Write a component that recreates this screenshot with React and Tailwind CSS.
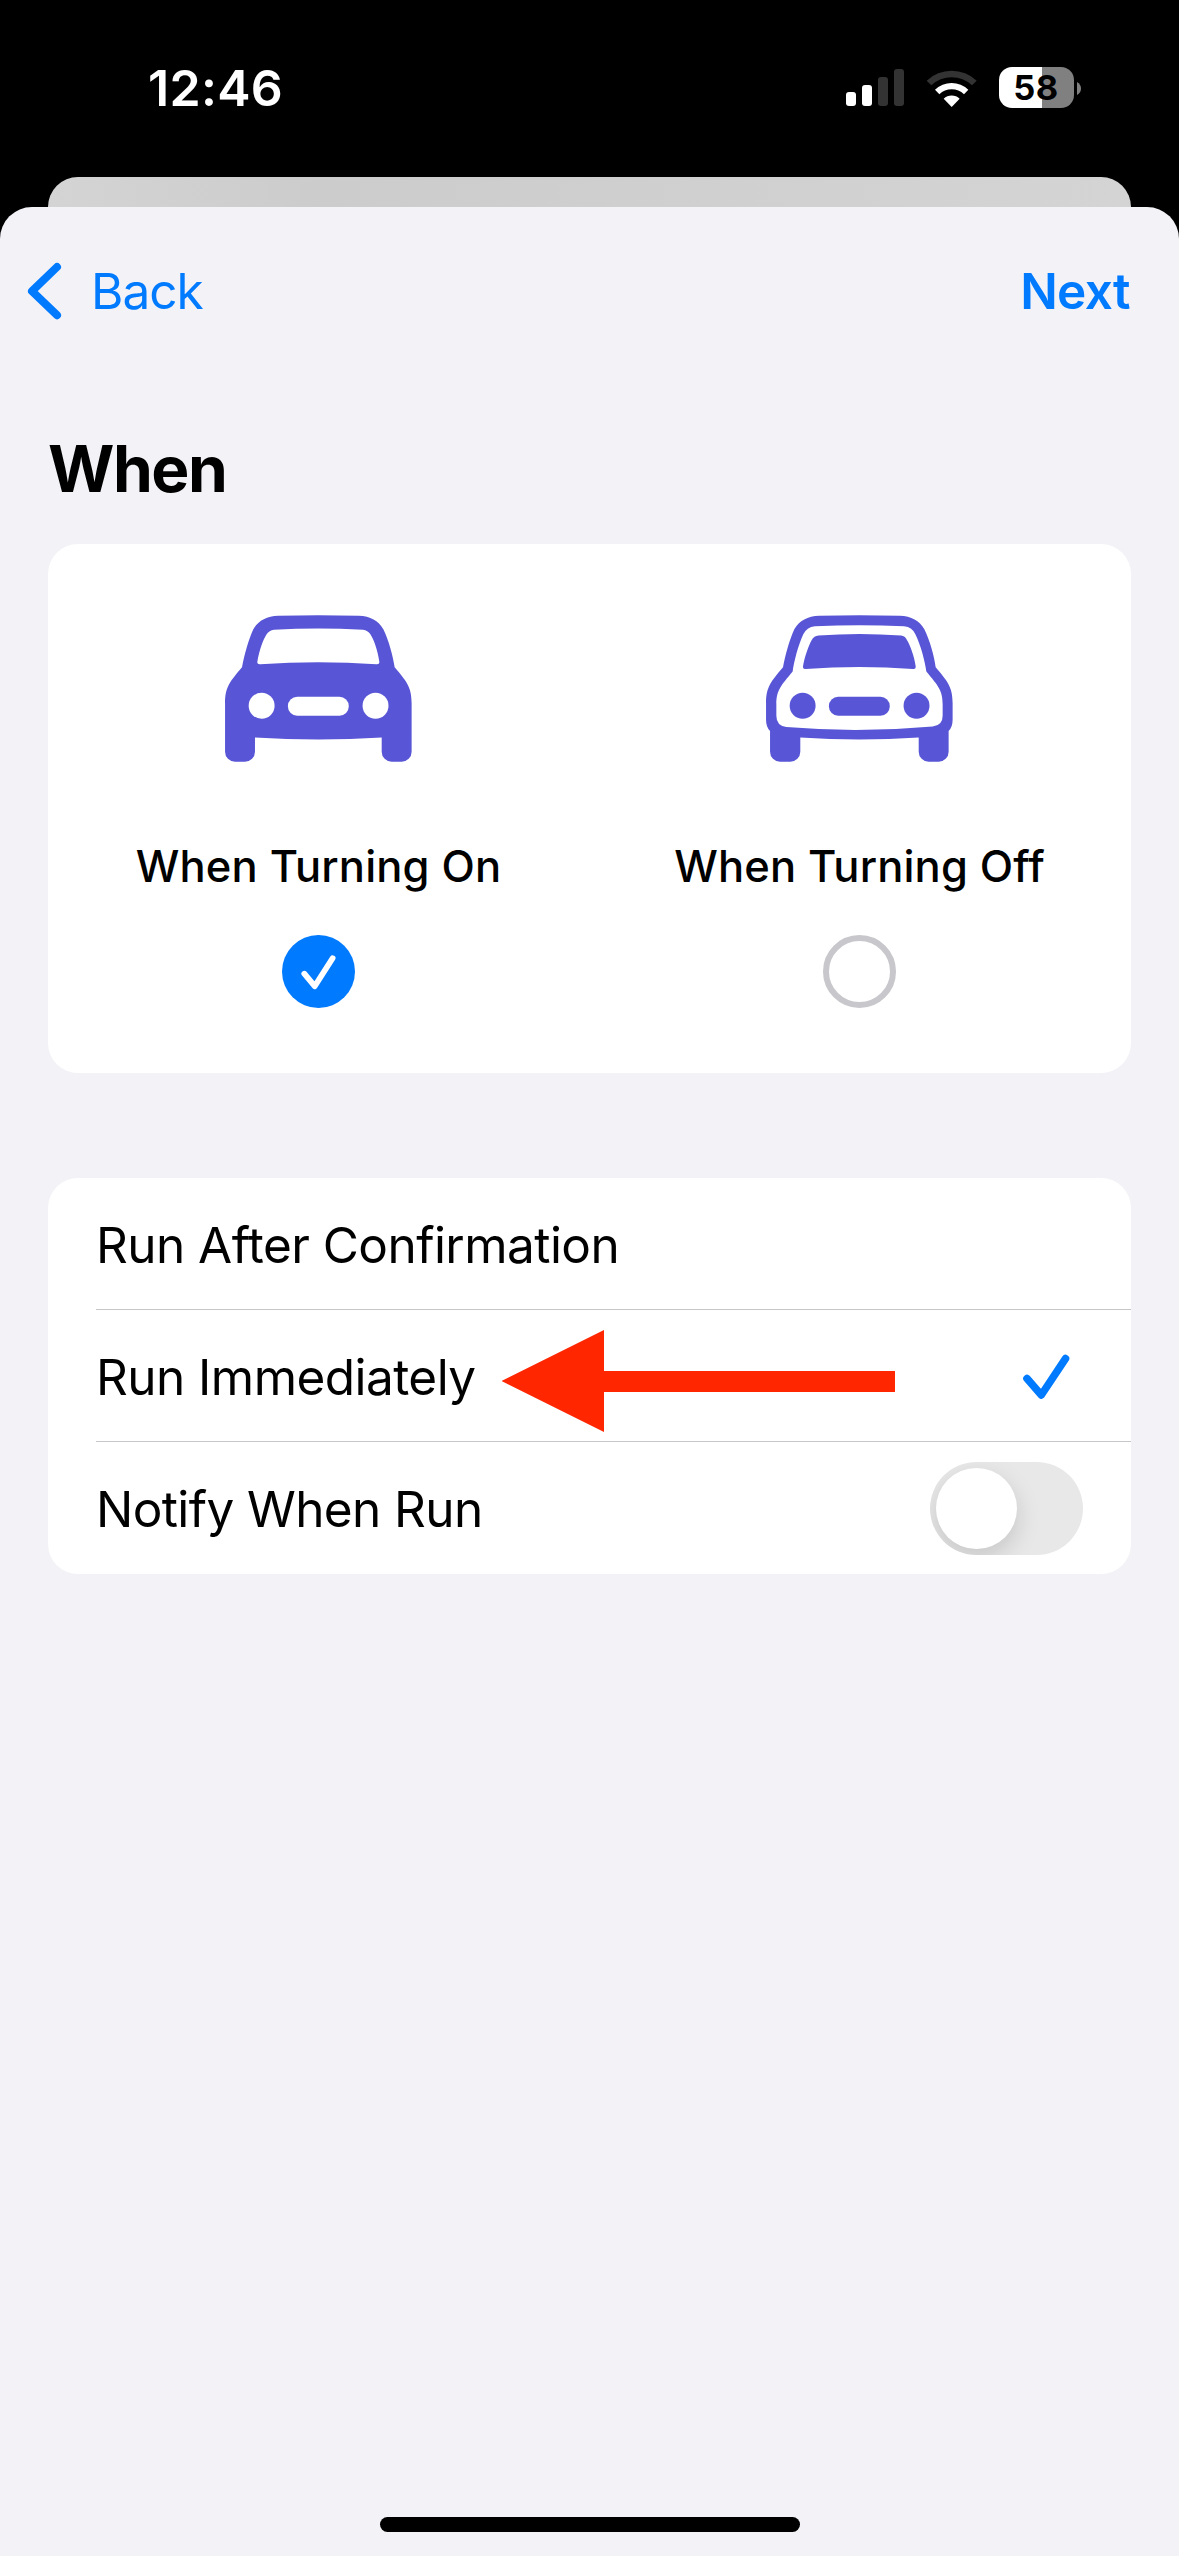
function StatusBar() {
  return (
    <div className="flex h-[177px] items-start justify-between pr-[98px] pl-[148px] text-white">
      <span className="mt-[58px] text-[50px] leading-[60px] font-semibold tracking-[0.3px]">12:46</span>
      <div className="mt-[67px] flex items-start">
        <div className="mt-0.5 flex h-[37px] items-end gap-[6px]">
          <span className="h-[14px] w-[10px] rounded-[3px] bg-white" />
          <span className="h-[21px] w-[10px] rounded-[3px] bg-white" />
          <span className="h-[29px] w-[10px] rounded-[3px] bg-[#333333]" />
          <span className="h-[37px] w-[10px] rounded-[3px] bg-[#333333]" />
        </div>
        <svg className="mt-[1.7px] ml-[22px] h-[38px] w-[51px]" viewBox="318 85 153 114" fill="currentColor">
          <path fill="#333333" d="M320 120A110 110 0 0 1 470 120L456 134A88 88 0 0 0 334 134Z" />
          <path d="M345 147A72 72 0 0 1 445 147L432 161A53 53 0 0 0 358 161Z" />
          <path d="M371 174A35 35 0 0 1 419 174L395 199Z" />
        </svg>
        <div className="ml-[22px] flex items-center gap-[3px]">
          <div className="flex h-[41px] w-[75px] items-center justify-center rounded-[13px] bg-[linear-gradient(to_right,#fff_43px,#808080_43px)]">
            <span className="pr-px text-[34.5px] leading-[41px] font-bold tracking-[0.4px] text-black">58</span>
          </div>
          <svg className="mt-px h-[13px] w-1" viewBox="0 0 4 13">
            <path d="M0 0Q4 2.5 4 6.5T0 13Z" fill="#808080" />
          </svg>
        </div>
      </div>
    </div>
  );
}

function CarOn() {
  return (
    <svg className="h-[147px] w-[187px]" viewBox="75 75 562 442" fill="#5856d6">
      <path
        fillRule="evenodd"
        d="M126 232C132 200 145 150 160 118C175 92 200 79 235 77.5Q355 74 477 77.5C512 79 536 92 551 118C567 150 580 200 585 232C620 274 636 290 636 340V486A30 30 0 0 1 606 516H576A30 30 0 0 1 546 486V443Q355 456 165 443V486A30 30 0 0 1 135 516H105A30 30 0 0 1 75 486V340C75 290 91 274 126 232ZM172 216C178 180 190 148 200 133Q208 121 222 119Q355 112 490 119Q504 121 512 133C522 148 534 180 539 216Q540 224 530 223Q355 211 181 223Q171 224 172 216Z"
      />
      <circle cx="185" cy="348" r="39" fill="#fff" />
      <circle cx="527.5" cy="348" r="39" fill="#fff" />
      <rect x="264" y="321" width="183" height="57" rx="28" fill="#fff" />
    </svg>
  );
}

function CarOff() {
  return (
    <svg className="h-[147px] w-[187px]" viewBox="78 75 562 442" fill="#5856d6">
      <path
        fillRule="evenodd"
        d="M129 232C135 200 148 150 163 118C178 92 203 79 238 77.5Q358 74 480 77.5C515 79 539 92 554 118C570 150 584 200 588 232C623 274 639 290 639 340V390Q639 412 627 424V486A30 30 0 0 1 597 516H567A30 30 0 0 1 537 486V443Q358 456 181 443V486A30 30 0 0 1 151 516H120A30 30 0 0 1 90 486V424Q78 412 78 390V340C78 290 94 274 129 232ZM158 245C162 215 175 165 190 133Q200 112 225 109Q358 102 493 109Q518 112 527 133C543 165 556 215 560 245C595 288 609 300 609 345V378Q609 408 579 410Q358 430 139 412Q109 408 109 378V345C109 300 123 288 158 245ZM189 230C194 200 207 165 215 151Q222 138 236 137Q358 127 484 137Q496 138 502 151C511 165 524 200 528 230Q529 238 520 237Q358 226 197 237Q188 238 189 230Z"
      />
      <circle cx="188" cy="348" r="39" />
      <circle cx="530.5" cy="348" r="39" />
      <rect x="267" y="321" width="183" height="57" rx="28" />
    </svg>
  );
}

function Option({ icon, label, selected }) {
  return (
    <div className="flex w-[541px] flex-col items-center">
      {icon}
      <span className="mt-[78px] text-[43.5px] leading-[52px] font-medium tracking-[0.15px] whitespace-nowrap">{label}</span>
      {selected ? (
        <svg className="mt-[43px] size-[73px]" viewBox="0 0 73 73" fill="none">
          <circle cx="36.5" cy="36.5" r="36.5" fill="#007aff" />
          <path d="M22.3 38.7L32.7 51.2L50.6 23.3" stroke="#fff" strokeWidth="5.8" strokeLinecap="round" strokeLinejoin="round" />
        </svg>
      ) : (
        <span className="mt-[43px] size-[73px] rounded-full border-[6px] border-[#c7c7cc]" />
      )}
    </div>
  );
}

function Row({ label, last, children }) {
  return (
    <div className="pl-12">
      <div className={last ? "flex h-[132px] items-center justify-between pr-12" : "flex h-[132px] items-center justify-between border-b border-[#c6c6c8] pr-12"}>
        <span className={last ? "pt-px text-[49.5px] leading-[60px] tracking-[-0.6px]" : "pt-[3px] text-[49.5px] leading-[60px] tracking-[-0.55px]"}>{label}</span>
        {children}
      </div>
    </div>
  );
}

export default function App() {
  return (
    <div className="flex h-[2556px] w-[1179px] flex-col overflow-hidden bg-black font-['Inter',sans-serif] text-black">
      <StatusBar />
      <div className="mx-12 h-[30px] shrink-0 rounded-t-[30px] bg-linear-to-r from-[#d4d4d4] via-[#cccccc] via-25% to-[#d4d4d4]" />

      <div className="flex flex-1 flex-col rounded-t-[32px] bg-[#f2f2f7]">
        <div className="flex h-[167px] items-center justify-between pr-[49px] pl-[27px] text-[49.5px] leading-[60px] text-[#007aff]">
          <div className="flex items-center gap-[29px]">
            <svg className="h-[58px] w-[35px]" viewBox="0 0 35 58" fill="none">
              <path d="M30 5L5 29.2L30 53.2" stroke="currentColor" strokeWidth="8" strokeLinecap="round" strokeLinejoin="round" />
            </svg>
            <span className="tracking-[-1px]">Back</span>
          </div>
          <span className="font-semibold tracking-[-0.6px]">Next</span>
        </div>

        <h1 className="mt-[63px] ml-12 text-[64px] leading-[64px] font-bold tracking-[-1.5px]">When</h1>

        <div className="mx-12 mt-[43px] flex h-[529px] rounded-[30px] bg-white pt-[71px]">
          <Option icon={<CarOn />} label="When Turning On" selected />
          <Option icon={<CarOff />} label="When Turning Off" />
        </div>

        <div className="relative mx-12 mt-[105px] h-[396px] rounded-[30px] bg-white">
          <Row label="Run After Confirmation" />
          <Row label="Run Immediately">
            <svg className="mr-[13px] h-[46px] w-[48px]" viewBox="0 0 48 46" fill="none">
              <path d="M5 25.6L19.3 42L43.5 5.6" stroke="#007aff" strokeWidth="7.6" strokeLinecap="round" strokeLinejoin="round" />
            </svg>
          </Row>
          <Row label="Notify When Run" last>
            <div className="flex h-[93px] w-[153px] items-center overflow-hidden rounded-full bg-[#e8e8e9] pl-[6px]">
              <span className="size-[81px] rounded-full bg-white shadow-[0_9px_24px_rgba(0,0,0,0.15)]" />
            </div>
          </Row>
          <svg className="absolute top-[152px] left-[454px] h-[102px] w-[394px]" viewBox="0 0 394 102">
            <path d="M-0.5 51L102 0V41H393V62H102V102Z" fill="#ff2600" />
          </svg>
        </div>

        <div className="mt-auto mb-6 h-[15px] w-[420px] self-center rounded-full bg-black" />
      </div>
    </div>
  );
}
